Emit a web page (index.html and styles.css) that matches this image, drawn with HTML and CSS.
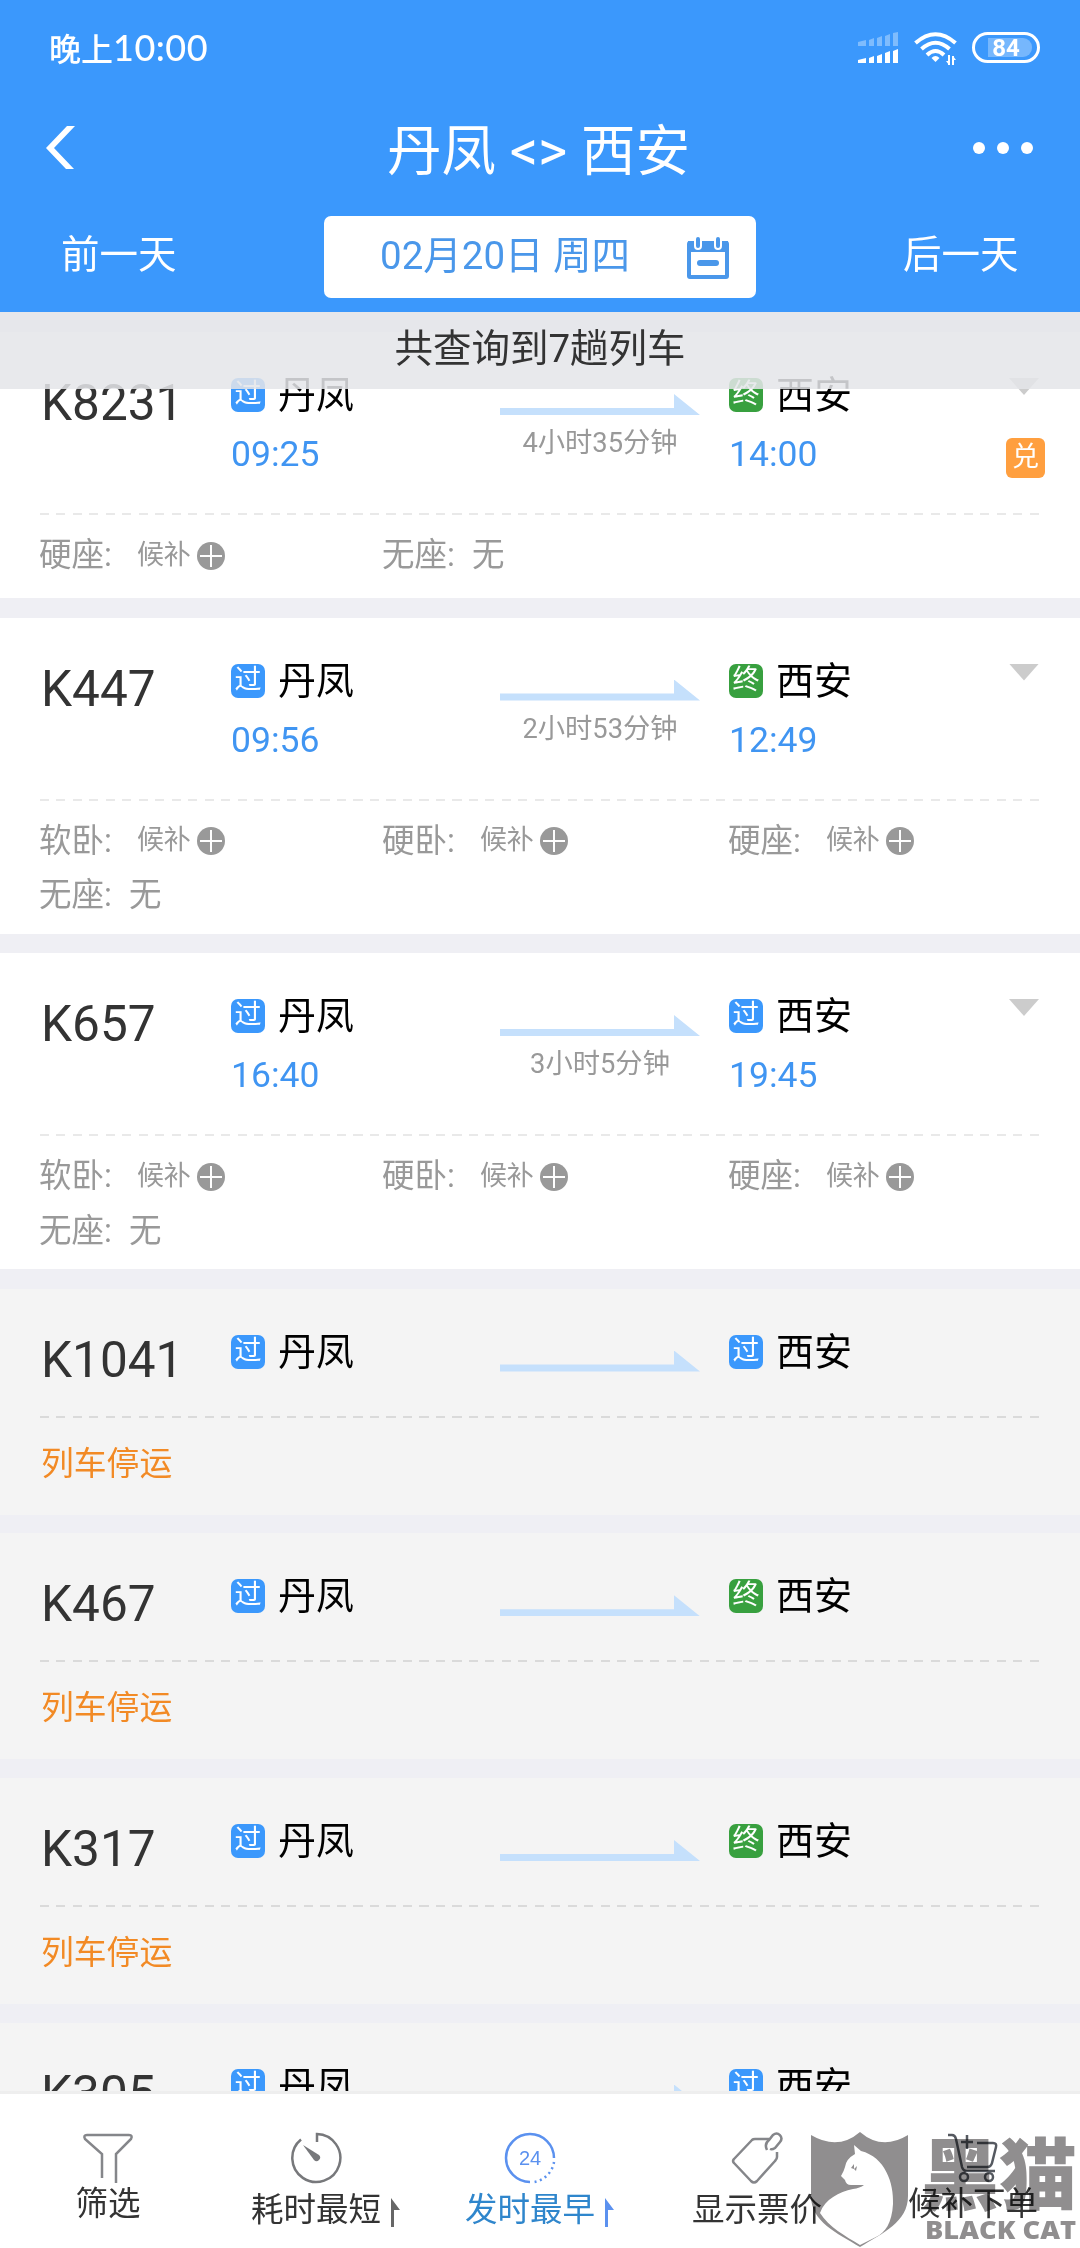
FILE: index.html
```html
<!DOCTYPE html>
<html lang="zh-CN">
<head>
    <meta charset="UTF-8">
    <meta name="viewport" content="width=device-width, initial-scale=1.0">
    <title>丹凤 - 西安</title>
    <link rel="stylesheet" href="styles.css">
</head>
<body>
    <div class="screen">
        <header class="header">
            <div class="status-bar">
                <span class="clock">晚上<span class="digits">10:00</span></span>
                <div class="status-icons">
                    <svg class="signal" width="41" height="33" viewBox="0 0 41 33" fill="#fff">
                        <g opacity=".35">
                            <path d="M0 10l8-2v6H0zM11 8l5-2v8h-5zM19 6l5-2v10h-5zM27 4l5-2v12h-5zM35 1l5-1v14h-5z"/>
                        </g>
                        <path d="M0 28l8-2v5H0zM11 26l5-2v7h-5zM19 24l5-2v9h-5zM27 21l5-2v12h-5zM35 19l5-2v14h-5z"/>
                    </svg>
                    <svg class="wifi" width="44" height="34" viewBox="0 0 44 34" fill="none" stroke="#fff" stroke-width="4">
                        <path d="M1.500 11Q21.500-6.500 41.500 11M7.500 17Q21.500 4.500 35.500 17M13 23Q21.500 15 30 23"/>
                        <path d="M21.500 30l-4-4q4-4 8 0z" fill="#fff" stroke="none"/>
                        <path d="M35 23v10M39 24v9" stroke-width="2"/>
                        <path d="M32 29h3v4zM42 28h-3v-4z" fill="#fff" stroke="none"/>
                    </svg>
                    <span class="battery"><span class="battery-level">84</span></span>
                </div>
            </div>
            <div class="title-bar">
                <svg class="back" width="32" height="44" viewBox="0 0 32 44" fill="#fff">
                    <path d="M23 0h8L10 22l20 21h-8L2 22z"/>
                </svg>
                <h1 class="title">丹凤 <span class="swap">&lt;&gt;</span> 西安</h1>
                <div class="more"><i></i><i></i><i></i></div>
            </div>
            <div class="date-bar">
                <a class="day">前一天</a>
                <div class="date-box">
                    <span>02月20日 周四</span>
                    <svg width="42" height="42" viewBox="0 0 42 42">
                        <rect x="2" y="6" width="38" height="34" fill="none" stroke="#4a97ea" stroke-width="4" rx="1"/>
                        <path d="M1 4h40v11H1z" fill="#4a97ea"/>
                        <path d="M11 0v9M31 0v9" stroke="#fff" stroke-width="8" stroke-linecap="round"/>
                        <path d="M11 2v7M31 2v7" stroke="#4a97ea" stroke-width="4" stroke-linecap="round"/>
                        <path d="M13 26h16" stroke="#4a97ea" stroke-width="6" stroke-linecap="round"/>
                    </svg>
                </div>
                <a class="day">后一天</a>
            </div>
        </header>

        <main class="list">
            <div class="count">共查询到7趟列车</div>

            <section class="card">
                <div class="trip">
                    <div class="train-no">K8231</div>
                    <div class="stop">
                        <div class="station"><span class="tag">过</span>丹凤</div>
                        <div class="time">09:25</div>
                    </div>
                    <div class="way"><div class="arrow"></div><div class="duration">4小时35分钟</div></div>
                    <div class="stop">
                        <div class="station"><span class="tag end">终</span>西安</div>
                        <div class="time">14:00</div>
                    </div>
                    <div class="side"><div class="expand"></div><div class="points">兑</div></div>
                </div>
                <div class="seats">
                    <div class="seat">硬座:<span class="wait">候补</span><i class="plus"></i></div>
                    <div class="seat">无座:<span class="none">无</span></div>
                </div>
            </section>

            <section class="card">
                <div class="trip">
                    <div class="train-no">K447</div>
                    <div class="stop">
                        <div class="station"><span class="tag">过</span>丹凤</div>
                        <div class="time">09:56</div>
                    </div>
                    <div class="way"><div class="arrow"></div><div class="duration">2小时53分钟</div></div>
                    <div class="stop">
                        <div class="station"><span class="tag end">终</span>西安</div>
                        <div class="time">12:49</div>
                    </div>
                    <div class="side"><div class="expand"></div></div>
                </div>
                <div class="seats">
                    <div class="seat">软卧:<span class="wait">候补</span><i class="plus"></i></div>
                    <div class="seat">硬卧:<span class="wait">候补</span><i class="plus"></i></div>
                    <div class="seat">硬座:<span class="wait">候补</span><i class="plus"></i></div>
                    <div class="seat">无座:<span class="none">无</span></div>
                </div>
            </section>

            <section class="card">
                <div class="trip">
                    <div class="train-no">K657</div>
                    <div class="stop">
                        <div class="station"><span class="tag">过</span>丹凤</div>
                        <div class="time">16:40</div>
                    </div>
                    <div class="way"><div class="arrow"></div><div class="duration">3小时5分钟</div></div>
                    <div class="stop">
                        <div class="station"><span class="tag">过</span>西安</div>
                        <div class="time">19:45</div>
                    </div>
                    <div class="side"><div class="expand"></div></div>
                </div>
                <div class="seats">
                    <div class="seat">软卧:<span class="wait">候补</span><i class="plus"></i></div>
                    <div class="seat">硬卧:<span class="wait">候补</span><i class="plus"></i></div>
                    <div class="seat">硬座:<span class="wait">候补</span><i class="plus"></i></div>
                    <div class="seat">无座:<span class="none">无</span></div>
                </div>
            </section>

            <!-- Suspended trains -->
            <section class="card stopped">
                <div class="trip">
                    <div class="train-no">K1041</div>
                    <div class="stop"><div class="station"><span class="tag">过</span>丹凤</div></div>
                    <div class="way"><div class="arrow"></div></div>
                    <div class="stop"><div class="station"><span class="tag">过</span>西安</div></div>
                </div>
                <div class="notice">列车停运</div>
            </section>

            <section class="card stopped">
                <div class="trip">
                    <div class="train-no">K467</div>
                    <div class="stop"><div class="station"><span class="tag">过</span>丹凤</div></div>
                    <div class="way"><div class="arrow"></div></div>
                    <div class="stop"><div class="station"><span class="tag end">终</span>西安</div></div>
                </div>
                <div class="notice">列车停运</div>
            </section>

            <section class="card stopped">
                <div class="trip">
                    <div class="train-no">K317</div>
                    <div class="stop"><div class="station"><span class="tag">过</span>丹凤</div></div>
                    <div class="way"><div class="arrow"></div></div>
                    <div class="stop"><div class="station"><span class="tag end">终</span>西安</div></div>
                </div>
                <div class="notice">列车停运</div>
            </section>

            <section class="card stopped">
                <div class="trip">
                    <div class="train-no">K305</div>
                    <div class="stop"><div class="station"><span class="tag">过</span>丹凤</div></div>
                    <div class="way"><div class="arrow"></div></div>
                    <div class="stop"><div class="station"><span class="tag">过</span>西安</div></div>
                </div>
            </section>
        </main>

        <nav class="tabs">
            <a class="tab">
                <svg width="52" height="52" viewBox="0 0 52 52" fill="none" stroke="#85868a" stroke-width="2.500">
                    <path d="M20 46V22L3 7q-2-4 2-4h42q4 0 2 4L34 22v29"/>
                </svg>
                <span class="label">筛选</span>
            </a>
            <a class="tab low">
                <svg width="52" height="52" viewBox="0 0 52 52" fill="none" stroke="#77787b" stroke-width="2.500">
                    <path d="M27 10V2A24 24 0 1 1 11 7.500"/>
                    <path d="M13 13l16 10a3.500 3.500 0 1 1-5 5z" fill="#77787b" stroke="none"/>
                </svg>
                <span class="label">耗时最短<svg class="sort" width="9" height="29" viewBox="0 0 9 29"><path d="M0 0l9 12H3v17H0z" fill="#666"/></svg></span>
            </a>
            <a class="tab low active">
                <svg width="52" height="52" viewBox="0 0 52 52" fill="none" stroke="#5b91ef" stroke-width="2.500">
                    <path d="M26 50A24 24 0 1 1 50 26"/>
                    <path d="M50 30A24 24 0 0 1 30 50" stroke-dasharray="2 3.500"/>
                    <text class="hours" x="26" y="33" text-anchor="middle">24</text>
                </svg>
                <span class="label">发时最早<svg class="sort" width="9" height="29" viewBox="0 0 9 29"><path d="M0 0l9 12H3v17H0z" fill="#5b91ef"/></svg></span>
            </a>
            <a class="tab low">
                <svg width="52" height="52" viewBox="0 0 52 52" fill="none" stroke="#85868a" stroke-width="2.500">
                    <path d="M38 7H24q-2 0-3 1L3 27q-2 2 0 4l17 18q3 3 6 0l18-20q2-2 2-4v-5"/>
                    <path d="M36 18q-3-6 2-10l4-5c5-4 11 2 7 7l-5 6q-3 2-5 1"/>
                </svg>
                <span class="label">显示票价</span>
            </a>
            <a class="tab">
                <svg width="52" height="52" viewBox="0 0 52 52" fill="none" stroke="#555960" stroke-width="2.500">
                    <path d="M1 3h4q3 0 4 4l6 28q1 4 5 4h28M30 11h16q4 0 3 4l-4 16q-1 4-5 4H20M14 10h12M20 3v14"/>
                    <circle cx="17" cy="45" r="4"/>
                    <circle cx="42" cy="45" r="4"/>
                </svg>
                <span class="label">候补下单</span>
            </a>
        </nav>

        <!-- Watermark -->
        <div class="watermark">
            <svg width="98" height="116" viewBox="0 0 98 116">
                <path d="M0 3Q27 19 49 0Q71 19 97 3V64C97 90 72 101 49 115C26 101 0 90 0 64z" fill="#908e8f"/>
                <path d="M43 13l7 6C74 25 83 51 82 72C81 91 74 101 65 105L49 113C34 104 18 95 9 81C14 67 28 60 42 57Q49 56 53 53H40Q35 53 34 48L30 44Q33 39 34 35Q35 27 44 22z" fill="#fff"/>
                <path d="M40 36l3-4v5zM43 37l3-3-1 5z" fill="#908e8f"/>
            </svg>
            <div class="wm-text">
                <div class="wm-cn">黑猫</div>
                <svg class="wm-en" width="152" height="22"><text x="0" y="18" textLength="151" lengthAdjust="spacingAndGlyphs">BLACK CAT</text></svg>
            </div>
        </div>
    </div>
</body>
</html>
```
FILE: styles.css
```css
* {
    margin: 0;
    padding: 0;
    box-sizing: border-box;
}

body {
    font-family: Roboto, "Noto Sans CJK SC", sans-serif;
    font-weight: 400;
    background: #efeff4;
    color: #333;
}

.screen {
    position: relative;
    display: flex;
    flex-direction: column;
    width: 1080px;
    height: 2248px;
    overflow: hidden;
}

/* Header */
.header {
    height: 312px;
    background: #3b98fc;
    color: #fff;
}

.status-bar {
    display: flex;
    justify-content: space-between;
    height: 96px;
    padding: 32px 40px 0 49px;
}

.clock {
    font-family: Lato, "Noto Sans CJK SC", sans-serif;
    font-size: 32px;
    font-weight: 500;
    line-height: 31px;
}

.digits {
    font-size: 36px;
    letter-spacing: 0.500px;
}

.status-icons {
    display: flex;
}

.wifi {
    margin: 0 14px 0 15px;
}

.battery {
    width: 68px;
    height: 31px;
    padding: 3px 5px 3px 13px;
    border: 3px solid #fff;
    border-radius: 16px;
}

.battery-level {
    display: block;
    height: 19px;
    padding-right: 8px;
    border-radius: 0 9px 9px 0;
    background: rgba(255, 255, 255, 0.3);
    font-size: 24px;
    font-weight: 700;
    line-height: 21px;
    text-align: center;
}

.title-bar {
    display: flex;
    justify-content: space-between;
    align-items: center;
    height: 108px;
    padding: 0 47px 4px 44px;
}

.title {
    font-size: 54.500px;
    font-weight: 400;
    line-height: 80px;
    padding: 5px 0 0 28px;
}

.swap {
    font-size: 56px;
}

.more {
    display: flex;
    gap: 12px;
}

.more i {
    width: 12px;
    height: 12px;
    border-radius: 50%;
    background: #fff;
}

.date-bar {
    display: flex;
    justify-content: space-between;
    padding: 12px 61px 0;
}

.day {
    width: 116px;
    font-size: 38.500px;
    line-height: 78px;
}

.date-box {
    display: flex;
    justify-content: space-between;
    align-items: center;
    width: 432px;
    height: 82px;
    padding: 2px 27px 0 56px;
    border-radius: 7px;
    background: #fff;
    color: #4a97ea;
    font-size: 38.500px;
}

.date-box span {
    padding-bottom: 12px;
}

/* Train list */
.list {
    position: relative;
    flex: 1;
    min-height: 0;
    padding-top: 20px;
    overflow: hidden;
}

.count {
    position: absolute;
    top: 0;
    left: 0;
    z-index: 1;
    width: 100%;
    height: 77px;
    background: rgba(228, 229, 233, 0.86);
    font-size: 38.500px;
    line-height: 73px;
    text-align: center;
}

.card {
    margin-bottom: 19.500px;
    padding: 0 41px 17px 39px;
    background: #fff;
}

.trip {
    display: grid;
    grid-template-columns: 192px 269px 229px 271px 40px;
    height: 183px;
    padding-top: 41px;
    background: repeating-linear-gradient(90deg, #e9e9e9 0 9px, transparent 9px 16.500px) 1px 100% / 100% 2px no-repeat;
}

.train-no {
    padding-left: 2px;
    font-size: 49.500px;
    line-height: 60px;
}

.station {
    display: flex;
    align-items: center;
    gap: 13px;
    height: 44px;
    color: #000;
    font-size: 38px;
    line-height: 44px;
}

.tag {
    width: 34px;
    height: 34px;
    border-radius: 7px;
    background: #3b98fc;
    color: #fff;
    font-size: 27px;
    line-height: 32px;
    text-align: center;
}

.tag.end {
    background: #38a03f;
}

.time {
    margin-top: 16px;
    color: #4095f2;
    font-size: 35.500px;
    line-height: 42px;
}

.way {
    width: 200px;
    padding-top: 21px;
}

.arrow {
    height: 21px;
    background: #c5e0fc;
    clip-path: polygon(0 14px, 174px 14px, 174px 0, 200px 21px, 0 21px);
}

.duration {
    margin-top: 9px;
    color: #999;
    font-size: 27.300px;
    line-height: 38px;
    text-align: center;
}

.side {
    padding-top: 5px;
}

.expand {
    width: 30px;
    height: 17px;
    margin-left: 9px;
    background: #ccc;
    clip-path: polygon(0 0, 100% 0, 50% 100%);
}

.points {
    width: 39px;
    height: 40px;
    margin: 43px 0 0 6px;
    border-radius: 6px;
    background: #ff9f3f;
    color: #fff;
    font-size: 27px;
    line-height: 38px;
    text-align: center;
}

.seats {
    display: grid;
    grid-template-columns: 343px 346px 1fr;
    padding-top: 11px;
    color: #999;
    font-size: 32.500px;
}

.seat {
    display: flex;
    align-items: center;
    height: 55px;
    padding-bottom: 4px;
}

.card .seat:nth-child(4) {
    height: 50px;
    padding-bottom: 0;
}

.wait {
    margin: 1px 0 0 25px;
    font-size: 27px;
}

.none {
    margin-left: 17px;
}

.plus {
    width: 28px;
    height: 28px;
    margin: 8px 0 0 6px;
    border-radius: 50%;
    background:
        linear-gradient(#fff, #fff) center / 22px 2px no-repeat,
        linear-gradient(#fff, #fff) center / 2px 22px no-repeat,
        #999;
}

.stopped {
    height: 226px;
    margin-bottom: 18.700px;
    background: #f4f4f4;
}

.stopped .trip {
    height: 129px;
    background-image: repeating-linear-gradient(90deg, #dadada 0 9px, transparent 9px 16.500px);
}

.notice {
    padding: 22px 0 0 2px;
    color: #f28a25;
    font-size: 32.800px;
    line-height: 48px;
}

/* Bottom tabs */
.tabs {
    display: grid;
    grid-template-columns: 216px 200px 228px 226px 206px;
    height: 157px;
    padding-top: 38px;
    border-top: 3px solid #eee;
    background: #fff;
}

.tab {
    display: flex;
    flex-direction: column;
    align-items: center;
}

.tab .label {
    display: flex;
    height: 40px;
    font-size: 32.500px;
    line-height: 40px;
}

.tab.low .label {
    margin-top: 6px;
}

.sort {
    margin: 8px -19px 0 10px;
}

.tab.active {
    color: #2f86cc;
}

.hours {
    fill: #5b91ef;
    stroke: none;
    font-family: "Liberation Sans", sans-serif;
    font-size: 20px;
}

.watermark {
    position: absolute;
    right: 0;
    bottom: 0;
    display: flex;
    gap: 16px;
    width: 269px;
    height: 116px;
    color: #908e8f;
    mix-blend-mode: multiply;
}

.wm-text {
    width: 154px;
}

.wm-cn {
    height: 89px;
    margin-left: -4px;
    font-size: 78px;
    font-weight: 900;
    line-height: 92px;
}

.wm-en {
    display: block;
    fill: #908e8f;
    font-family: "Open Sans", sans-serif;
    font-size: 24px;
    font-weight: 800;
}
```
